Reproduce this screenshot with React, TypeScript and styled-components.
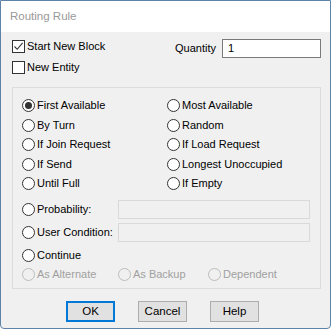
import React from "react";
import styled, { createGlobalStyle } from "styled-components";

const GlobalStyle = createGlobalStyle`
  html, body {
    margin: 0;
    padding: 0;
    background: #ffffff;
  }
  * {
    box-sizing: border-box;
  }
`;

const Window = styled.div`
  width: 331px;
  height: 329px;
  display: flex;
  flex-direction: column;
  border: 1px solid #5d84a8;
  border-bottom-left-radius: 4px;
  border-bottom-right-radius: 4px;
  overflow: hidden;
  background: #f0f0f0;
  font-family: "Liberation Sans", Arial, sans-serif;
  font-size: 11px;
  line-height: 13px;
  color: #000;
`;

const TitleBar = styled.div`
  height: 31px;
  flex: none;
  background: #ffffff;
  display: flex;
  align-items: center;
  padding-left: 9px;
  padding-bottom: 1px;
  font-size: 11.5px;
  color: #999999;
`;

const Body = styled.div`
  flex: 1;
  display: flex;
  flex-direction: column;
  padding: 7px 9px 0 11px;
`;

const TopRow = styled.div`
  display: flex;
  align-items: flex-start;
  justify-content: space-between;
  height: 19px;
`;

const Quantity = styled.div`
  display: flex;
  align-items: center;
  gap: 6px;
`;

const TextBox = styled.div<{ $width: number; $disabled?: boolean }>`
  width: ${(p) => p.$width}px;
  height: 19px;
  border: 1px solid ${(p) => (p.$disabled ? "#d9d9d9" : "#7a7a7a")};
  background: ${(p) => (p.$disabled ? "#f0f0f0" : "#ffffff")};
  display: flex;
  align-items: center;
  padding-left: 5px;
`;

const CheckLabel = styled.label<{ $offset?: number }>`
  display: flex;
  align-items: center;
  gap: 2px;
  height: 13px;
  margin-top: ${(p) => p.$offset ?? 0}px;
`;

const Box = styled.span`
  width: 13px;
  height: 13px;
  border: 1px solid #333333;
  background: #ffffff;
  display: flex;
  align-items: center;
  justify-content: center;
`;

const GroupBox = styled.div`
  margin-top: 13px;
  width: 309px;
  height: 202px;
  flex: none;
  border: 1px solid #dcdcdc;
  padding: 8px 0 0 9px;
  display: flex;
  flex-direction: column;
`;

const RadioGrid = styled.div`
  display: grid;
  grid-template-columns: 145px 1fr;
  grid-auto-rows: 19.5px;
`;

const RadioLabel = styled.label<{ $disabled?: boolean }>`
  display: flex;
  align-items: center;
  gap: 2px;
  color: ${(p) => (p.$disabled ? "#a0a0a0" : "#000000")};
  white-space: nowrap;
`;

const Circle = styled.span<{ $disabled?: boolean }>`
  width: 13px;
  height: 13px;
  flex: none;
  border-radius: 50%;
  border: 1px solid ${(p) => (p.$disabled ? "#bcbcbc" : "#333333")};
  background: ${(p) => (p.$disabled ? "#f0f0f0" : "#ffffff")};
  display: flex;
  align-items: center;
  justify-content: center;
`;

const Dot = styled.span`
  width: 7px;
  height: 7px;
  border-radius: 50%;
  background: #333333;
`;

const FieldRows = styled.div`
  margin-top: 6.5px;
  display: flex;
  flex-direction: column;
  gap: 4px;
`;

const FieldRow = styled.div`
  display: flex;
  align-items: center;
  justify-content: space-between;
  width: 288px;
`;

const ContinueRow = styled.div`
  margin-top: 4px;
  height: 19px;
  display: flex;
`;

const SubRow = styled.div`
  display: grid;
  grid-template-columns: 96px 90px 1fr;
  height: 19px;
`;

const Buttons = styled.div`
  display: flex;
  justify-content: center;
  gap: 23px;
  margin-top: 12px;
  padding-right: 8px;
`;

const Button = styled.div<{ $primary?: boolean }>`
  width: 49px;
  height: 21px;
  border: ${(p) => (p.$primary ? "2px solid #0078d7" : "1px solid #adadad")};
  background: #e1e1e1;
  display: flex;
  align-items: center;
  justify-content: center;
  font-size: 11.5px;
`;

const Radio = ({
  label,
  checked,
  disabled,
}: {
  label: string;
  checked?: boolean;
  disabled?: boolean;
}) => (
  <RadioLabel $disabled={disabled}>
    <Circle $disabled={disabled}>{checked && <Dot />}</Circle>
    {label}
  </RadioLabel>
);

const Check = ({
  label,
  checked,
  offset,
}: {
  label: string;
  checked?: boolean;
  offset?: number;
}) => (
  <CheckLabel $offset={offset}>
    <Box>
      {checked && (
        <svg width="11" height="11" viewBox="0 0 11 11">
          <path d="M1.5 5.5 L4.2 8.3 L9.6 1.8" fill="none" stroke="#333" strokeWidth="1.1" />
        </svg>
      )}
    </Box>
    {label}
  </CheckLabel>
);

const rules = [
  ["First Available", "Most Available"],
  ["By Turn", "Random"],
  ["If Join Request", "If Load Request"],
  ["If Send", "Longest Unoccupied"],
  ["Until Full", "If Empty"],
];

export default function App() {
  return (
    <>
      <GlobalStyle />
      <Window>
        <TitleBar>Routing Rule</TitleBar>
        <Body>
          <TopRow>
            <Check label="Start New Block" checked offset={1} />
            <Quantity>
              Quantity
              <TextBox $width={99}>1</TextBox>
            </Quantity>
          </TopRow>
          <Check label="New Entity" offset={3} />
          <GroupBox>
            <RadioGrid>
              {rules.map(([a, b], i) => (
                <React.Fragment key={a}>
                  <Radio label={a} checked={i === 0} />
                  <Radio label={b} />
                </React.Fragment>
              ))}
            </RadioGrid>
            <FieldRows>
              <FieldRow>
                <Radio label="Probability:" />
                <TextBox $width={192} $disabled />
              </FieldRow>
              <FieldRow>
                <Radio label="User Condition:" />
                <TextBox $width={192} $disabled />
              </FieldRow>
            </FieldRows>
            <ContinueRow>
              <Radio label="Continue" />
            </ContinueRow>
            <SubRow>
              <Radio label="As Alternate" disabled />
              <Radio label="As Backup" disabled />
              <Radio label="Dependent" disabled />
            </SubRow>
          </GroupBox>
          <Buttons>
            <Button $primary>OK</Button>
            <Button>Cancel</Button>
            <Button>Help</Button>
          </Buttons>
        </Body>
      </Window>
    </>
  );
}
